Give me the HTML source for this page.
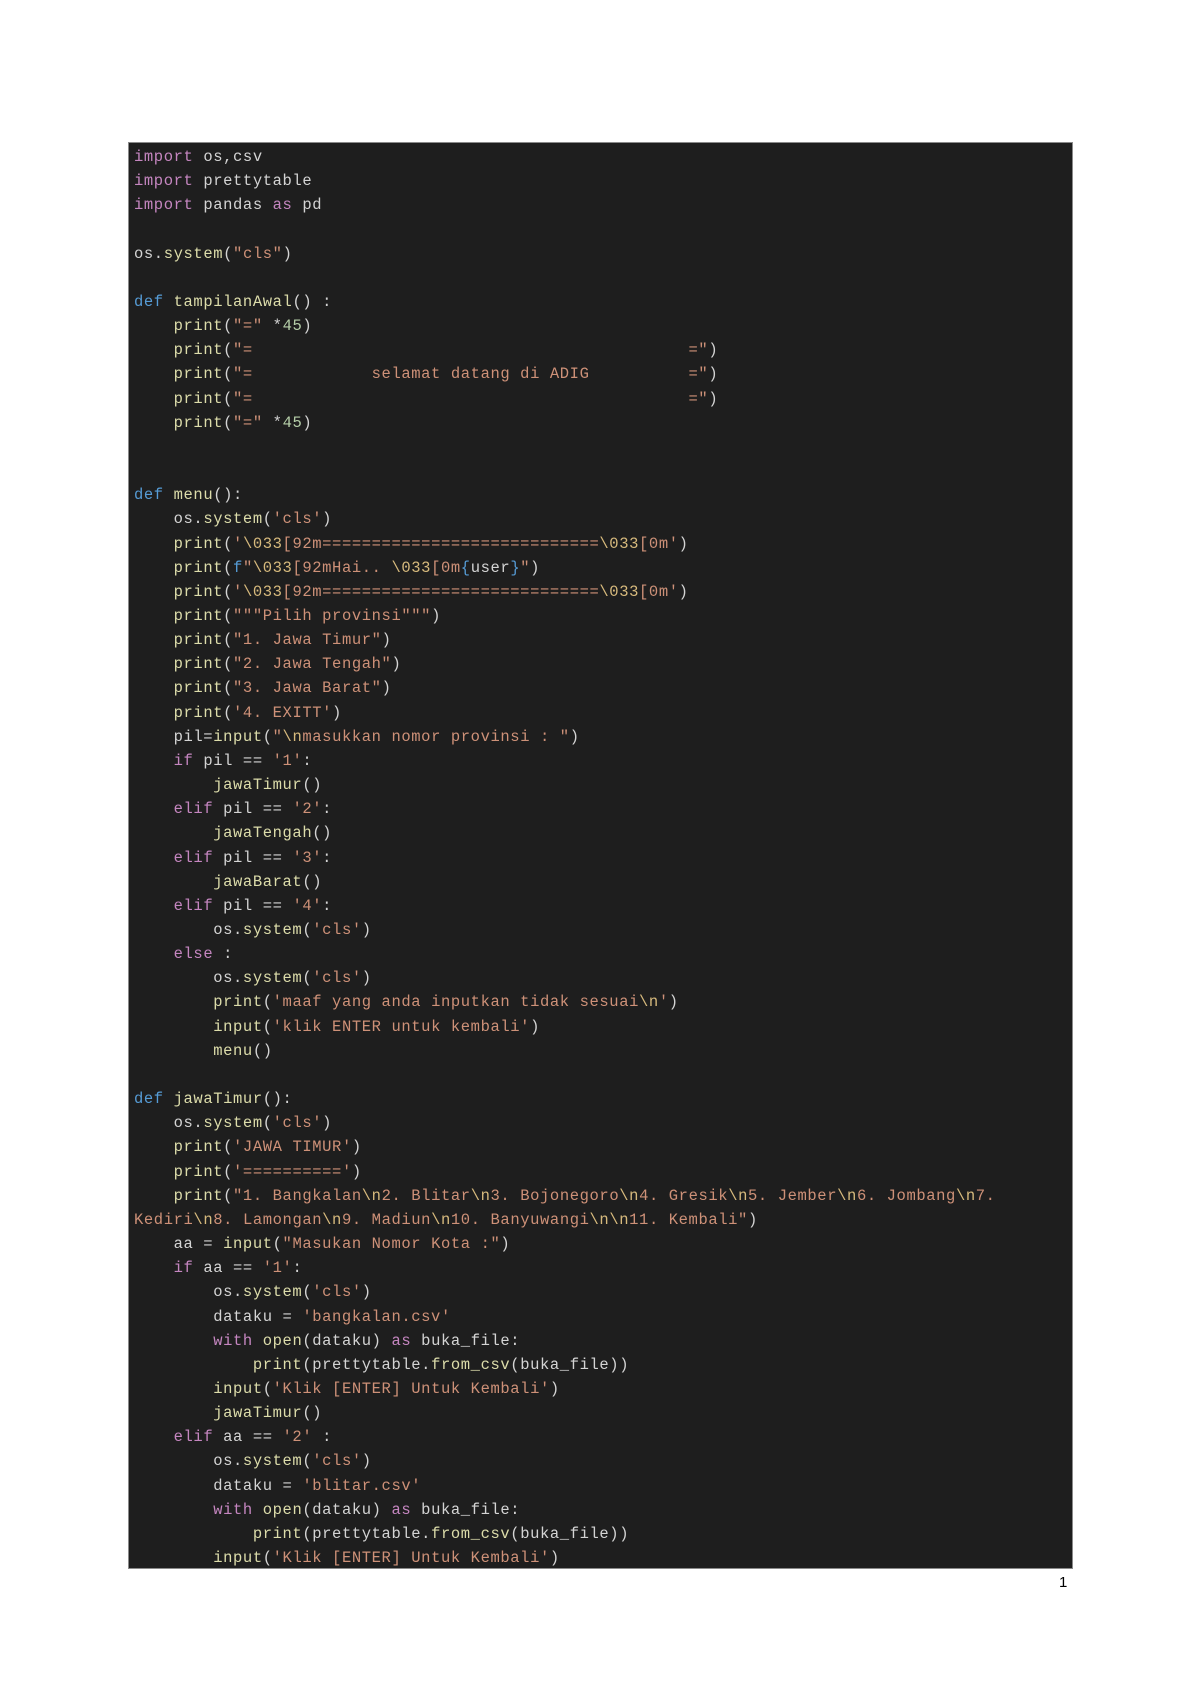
<!DOCTYPE html>
<html><head><meta charset="utf-8"><style>
html,body{margin:0;padding:0;background:#fff;width:1200px;height:1696px;overflow:hidden}
.box{position:absolute;left:128px;top:142px;width:945px;height:1427px;background:#1e1e1e;border:1px solid #8a8a8a;box-sizing:border-box}
pre{position:absolute;left:134px;top:145px;margin:0;font-family:"Liberation Mono",monospace;font-size:15.5px;letter-spacing:0.6px;line-height:24.15px;color:#d4d4d4;white-space:pre}
.k{color:#c586c0}.d{color:#569cd6}.f{color:#dcdcaa}.s{color:#ce9178}.n{color:#b5cea8}.e{color:#d7ba7d}.v{color:#9cdcfe}
.pg{position:absolute;left:1059px;top:1574px;font-family:"Liberation Sans",sans-serif;font-size:15px;color:#000}
</style></head><body>
<div class="box"></div>
<pre><span class="k">import</span> os,csv
<span class="k">import</span> prettytable
<span class="k">import</span> pandas <span class="k">as</span> pd

os.<span class="f">system</span>(<span class="s">"cls"</span>)

<span class="d">def</span> <span class="f">tampilanAwal</span>() :
    <span class="f">print</span>(<span class="s">"="</span> *<span class="n">45</span>)
    <span class="f">print</span>(<span class="s">"=                                            ="</span>)
    <span class="f">print</span>(<span class="s">"=            selamat datang di ADIG          ="</span>)
    <span class="f">print</span>(<span class="s">"=                                            ="</span>)
    <span class="f">print</span>(<span class="s">"="</span> *<span class="n">45</span>)


<span class="d">def</span> <span class="f">menu</span>():
    os.<span class="f">system</span>(<span class="s">'cls'</span>)
    <span class="f">print</span>(<span class="s">'<span class="e">\033</span>[92m============================<span class="e">\033</span>[0m'</span>)
    <span class="f">print</span>(<span class="d">f</span><span class="s">"<span class="e">\033</span>[92mHai.. <span class="e">\033</span>[0m</span><span class="d">{</span>user<span class="d">}</span><span class="s">"</span>)
    <span class="f">print</span>(<span class="s">'<span class="e">\033</span>[92m============================<span class="e">\033</span>[0m'</span>)
    <span class="f">print</span>(<span class="s">"""Pilih provinsi"""</span>)
    <span class="f">print</span>(<span class="s">"1. Jawa Timur"</span>)
    <span class="f">print</span>(<span class="s">"2. Jawa Tengah"</span>)
    <span class="f">print</span>(<span class="s">"3. Jawa Barat"</span>)
    <span class="f">print</span>(<span class="s">'4. EXITT'</span>)
    pil=<span class="f">input</span>(<span class="s">"<span class="e">\n</span>masukkan nomor provinsi : "</span>)
    <span class="k">if</span> pil == <span class="s">'1'</span>:
        <span class="f">jawaTimur</span>()
    <span class="k">elif</span> pil == <span class="s">'2'</span>:
        <span class="f">jawaTengah</span>()
    <span class="k">elif</span> pil == <span class="s">'3'</span>:
        <span class="f">jawaBarat</span>()
    <span class="k">elif</span> pil == <span class="s">'4'</span>:
        os.<span class="f">system</span>(<span class="s">'cls'</span>)
    <span class="k">else</span> :
        os.<span class="f">system</span>(<span class="s">'cls'</span>)
        <span class="f">print</span>(<span class="s">'maaf yang anda inputkan tidak sesuai<span class="e">\n</span>'</span>)
        <span class="f">input</span>(<span class="s">'klik ENTER untuk kembali'</span>)
        <span class="f">menu</span>()

<span class="d">def</span> <span class="f">jawaTimur</span>():
    os.<span class="f">system</span>(<span class="s">'cls'</span>)
    <span class="f">print</span>(<span class="s">'JAWA TIMUR'</span>)
    <span class="f">print</span>(<span class="s">'=========='</span>)
    <span class="f">print</span>(<span class="s">"1. Bangkalan<span class="e">\n</span>2. Blitar<span class="e">\n</span>3. Bojonegoro<span class="e">\n</span>4. Gresik<span class="e">\n</span>5. Jember<span class="e">\n</span>6. Jombang<span class="e">\n</span>7.</span>
<span class="s">Kediri<span class="e">\n</span>8. Lamongan<span class="e">\n</span>9. Madiun<span class="e">\n</span>10. Banyuwangi<span class="e">\n\n</span>11. Kembali"</span>)
    aa = <span class="f">input</span>(<span class="s">"Masukan Nomor Kota :"</span>)
    <span class="k">if</span> aa == <span class="s">'1'</span>:
        os.<span class="f">system</span>(<span class="s">'cls'</span>)
        dataku = <span class="s">'bangkalan.csv'</span>
        <span class="k">with</span> <span class="f">open</span>(dataku) <span class="k">as</span> buka_file:
            <span class="f">print</span>(prettytable.<span class="f">from_csv</span>(buka_file))
        <span class="f">input</span>(<span class="s">'Klik [ENTER] Untuk Kembali'</span>)
        <span class="f">jawaTimur</span>()
    <span class="k">elif</span> aa == <span class="s">'2'</span> :
        os.<span class="f">system</span>(<span class="s">'cls'</span>)
        dataku = <span class="s">'blitar.csv'</span>
        <span class="k">with</span> <span class="f">open</span>(dataku) <span class="k">as</span> buka_file:
            <span class="f">print</span>(prettytable.<span class="f">from_csv</span>(buka_file))
        <span class="f">input</span>(<span class="s">'Klik [ENTER] Untuk Kembali'</span>)</pre>
<div class="pg">1</div>
</body></html>
